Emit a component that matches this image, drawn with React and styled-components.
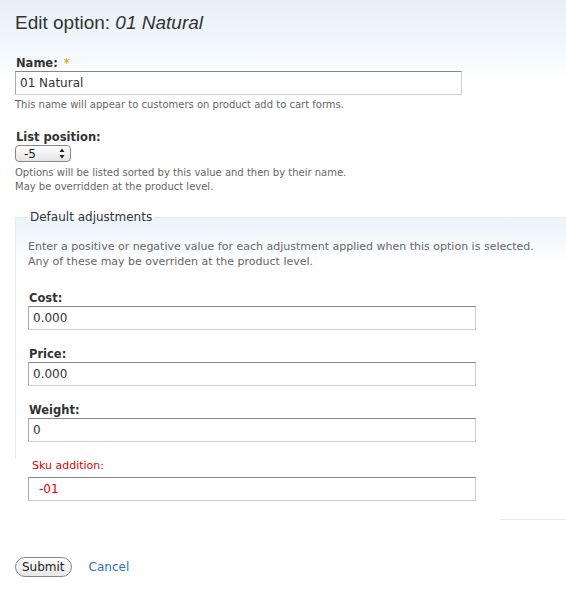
import React from "react";
import styled, { createGlobalStyle } from "styled-components";

const GlobalStyle = createGlobalStyle`
  html, body {
    margin: 0;
    padding: 0;
  }
  body {
    background: linear-gradient(to bottom, #e6f0f8 0px, #f1f7fc 45px, #ffffff 80px);
    background-repeat: no-repeat;
    font-family: "DejaVu Sans", Verdana, sans-serif;
    color: #333;
  }
`;

const Page = styled.div`
  padding: 12px 15px 20px 15px;
`;

const Title = styled.h1`
  margin: 0 0 22px 0;
  font-family: "Liberation Sans", Arial, sans-serif;
  font-size: 19px;
  font-weight: normal;
  color: #333;
  line-height: 22px;

  em {
    font-style: italic;
  }
`;

const Field = styled.div`
  margin-bottom: ${({ $gap }) => $gap ?? 17}px;
`;

const Label = styled.label`
  display: block;
  font-size: ${({ $error }) => ($error ? 11 : 11.5)}px;
  line-height: 14px;
  font-weight: ${({ $error }) => ($error ? "normal" : "bold")};
  color: ${({ $error }) => ($error ? "#dd0000" : "#333")};
  margin-bottom: ${({ $error }) => ($error ? 4 : 1)}px;
  padding-left: ${({ $error }) => ($error ? "4px" : "1px")};
`;

const Required = styled.span`
  color: #f0a020;
  margin-left: 2px;
`;

const TextInput = styled.input`
  display: block;
  box-sizing: border-box;
  width: ${({ $width }) => $width}px;
  height: 24px;
  padding: 0 ${({ $error }) => ($error ? "10px" : "4px")};
  border: 1px solid #ccc;
  border-top-color: #888;
  border-left-color: #aaa;
  background: #fff;
  font-family: "DejaVu Sans", Verdana, sans-serif;
  font-size: 12px;
  color: ${({ $error }) => ($error ? "#dd0000" : "#333")};
  outline: none;
`;

const Select = styled.div`
  display: flex;
  align-items: center;
  justify-content: space-between;
  box-sizing: border-box;
  width: 56px;
  height: 17px;
  padding: 0 5px 0 8px;
  border: 1px solid #888;
  border-radius: 4px;
  background: linear-gradient(to bottom, #ffffff, #e4e4e4);
  font-size: 12px;
  color: #222;
`;

const Arrows = styled.svg`
  width: 6px;
  height: 11px;
`;

const Description = styled.div`
  font-size: 10px;
  line-height: 14px;
  color: #666;
  margin-top: ${({ $top }) => $top ?? 2}px;
`;

const Fieldset = styled.fieldset`
  margin: 16px -15px 0 0;
  padding: 15px 0 0 12px;
  border: 1px solid #e4eaef;
  border-right: none;
  background: linear-gradient(to bottom, #eaf3fa 0px, #ffffff 45px);
`;

const Legend = styled.legend`
  font-size: 12px;
  color: #333;
  padding: 0 2px;
  margin-left: 0;
`;

const FieldsetDescription = styled.div`
  font-size: 11px;
  line-height: 15px;
  color: #666;
  margin-bottom: 22px;
`;

const SkuArea = styled.div`
  position: relative;
  z-index: 1;
  background: #fff;
  margin: 0 0 -2px -14px;
  padding: 0 0 20px 14px;
  width: 472px;
`;

const Actions = styled.div`
  display: flex;
  align-items: center;
  gap: 17px;
  margin-top: 37px;
`;

const SubmitButton = styled.button`
  height: 20px;
  padding: 0 6px;
  border: 1px solid #888;
  border-radius: 10px;
  background: linear-gradient(to bottom, #ffffff, #e6e6e6);
  font-family: "DejaVu Sans", Verdana, sans-serif;
  font-size: 12px;
  color: #222;
`;

const CancelLink = styled.a`
  font-size: 12px;
  color: #2a72b0;
  text-decoration: none;
`;

const adjustments = [
  { label: "Cost", value: "0.000" },
  { label: "Price", value: "0.000" },
  { label: "Weight", value: "0" },
];

export default function App() {
  return (
    <>
      <GlobalStyle />
      <Page>
        <Title>
          Edit option: <em>01 Natural</em>
        </Title>

        <Field $gap={18}>
          <Label>
            Name: <Required>*</Required>
          </Label>
          <TextInput $width={447} defaultValue="01 Natural" />
          <Description $top={3}>
            This name will appear to customers on product add to cart forms.
          </Description>
        </Field>

        <Field $gap={0}>
          <Label>List position:</Label>
          <Select>
            <span>-5</span>
            <Arrows viewBox="0 0 6 11">
              <path d="M3 0.5 L5.5 4 L0.5 4 Z" fill="#222" />
              <path d="M3 10.5 L5.5 7 L0.5 7 Z" fill="#222" />
            </Arrows>
          </Select>
          <Description $top={4}>
            Options will be listed sorted by this value and then by their name.
            <br />
            May be overridden at the product level.
          </Description>
        </Field>

        <Fieldset>
          <Legend>Default adjustments</Legend>
          <FieldsetDescription>
            Enter a positive or negative value for each adjustment applied when
            this option is selected.
            <br />
            Any of these may be overriden at the product level.
          </FieldsetDescription>
          {adjustments.map((a) => (
            <Field key={a.label}>
              <Label>{a.label}:</Label>
              <TextInput $width={448} defaultValue={a.value} />
            </Field>
          ))}
          <SkuArea>
            <Label $error>Sku addition:</Label>
            <TextInput $width={448} $error defaultValue="-01" />
          </SkuArea>
        </Fieldset>

        <Actions>
          <SubmitButton type="button">Submit</SubmitButton>
          <CancelLink href="#">Cancel</CancelLink>
        </Actions>
      </Page>
    </>
  );
}
